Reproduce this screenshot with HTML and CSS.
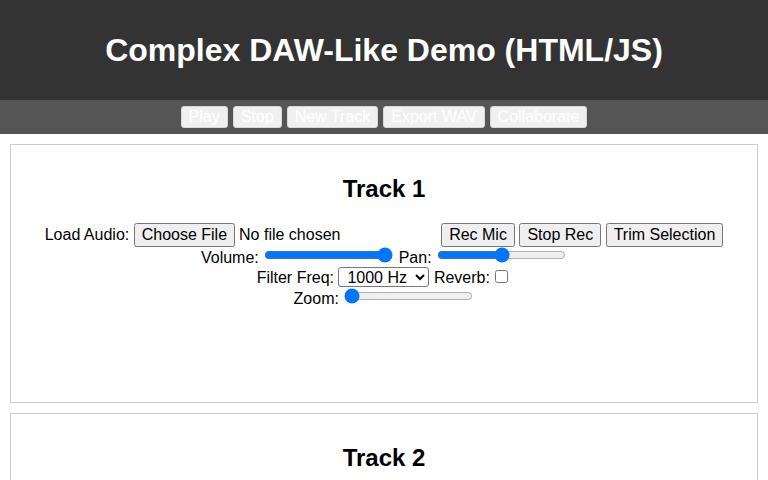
FILE: index.html
```html
<!DOCTYPE html>
<html>
<head>
<meta charset="utf-8">
<title>Complex DAW-Like Demo</title>
<link rel="stylesheet" href="styles.css">
</head>
<body>
<header class="header">
  <h1>Complex DAW-Like Demo (HTML/JS)</h1>
</header>
<nav class="toolbar">
  <button>Play</button>
  <button>Stop</button>
  <button>New Track</button>
  <button>Export WAV</button>
  <button>Collaborate</button>
</nav>
<main class="tracks">
  <section class="track">
    <h2>Track 1</h2>
    <div class="row row-load">
      <label>Load Audio:</label> <input type="file"> <button>Rec Mic</button> <button>Stop Rec</button> <button>Trim Selection</button>
    </div>
    <div class="row row-mix">
      <label>Volume:</label> <input type="range" min="0" max="1" step="0.01" value="1"> <label>Pan:</label> <input type="range" min="-1" max="1" step="0.01" value="0">
    </div>
    <div class="row row-fx">
      <label>Filter Freq:</label> <select><option>1000 Hz</option><option>500 Hz</option><option>2000 Hz</option></select> <label>Reverb:</label> <input type="checkbox">
    </div>
    <div class="row row-zoom">
      <label>Zoom:</label> <input type="range" min="1" max="10" value="1">
    </div>
    <div class="wave"></div>
  </section>
  <section class="track">
    <h2>Track 2</h2>
    <div class="row row-load">
      <label>Load Audio:</label> <input type="file"> <button>Rec Mic</button> <button>Stop Rec</button> <button>Trim Selection</button>
    </div>
    <div class="row row-mix">
      <label>Volume:</label> <input type="range" min="0" max="1" step="0.01" value="1"> <label>Pan:</label> <input type="range" min="-1" max="1" step="0.01" value="0">
    </div>
    <div class="row row-fx">
      <label>Filter Freq:</label> <select><option>1000 Hz</option><option>500 Hz</option><option>2000 Hz</option></select> <label>Reverb:</label> <input type="checkbox">
    </div>
    <div class="row row-zoom">
      <label>Zoom:</label> <input type="range" min="1" max="10" value="1">
    </div>
    <div class="wave"></div>
  </section>
</main>
</body>
</html>
```
FILE: styles.css
```css
html, body {
  margin: 0;
  padding: 0;
  background: #fff;
  font-family: "Liberation Sans", Arial, sans-serif;
  font-size: 16px;
  color: #000;
}

button, input, select {
  font-family: "Liberation Sans", Arial, sans-serif;
  font-size: 16px;
}

.header {
  background: #333;
  color: #fff;
  text-align: center;
  padding: 10px 0;
}

.header h1 {
  margin: 21px 0;
  font-size: 32px;
  font-weight: bold;
  line-height: 38px;
}

.toolbar {
  background: #555;
  display: flex;
  justify-content: center;
  gap: 5px;
  padding: 6px 0;
}

.toolbar button {
  color: #fff;
  background: #f0f0f0;
  border: 1px solid #d8d8d8;
  border-radius: 3px;
  padding: 1px 7px;
  line-height: 18px;
}

.tracks {
  padding: 0;
}

.track {
  border: 1px solid #ccc;
  margin: 10px;
  padding: 10px;
  text-align: center;
}

.track h2 {
  font-size: 24px;
  margin: 20px 0;
  line-height: 28px;
}

.row {
  margin: 0;
}

.row-load {
  height: 22px;
}

.row-mix {
  height: 22px;
}

.row-fx {
  height: 19px;
}

.row-zoom {
  height: 20px;
}

.row input[type="range"] {
  margin: 2px 1px;
}

.row input[type="checkbox"] {
  margin: 3px 3px 3px 1px;
}

.row select {
  width: 91px;
  height: 20px;
  box-sizing: border-box;
  background: #fff;
  border: 1px solid #767676;
  border-radius: 3px;
  padding: 0 2px 0 4px;
  color: #000;
}

.wave {
  height: 86px;
}
```
